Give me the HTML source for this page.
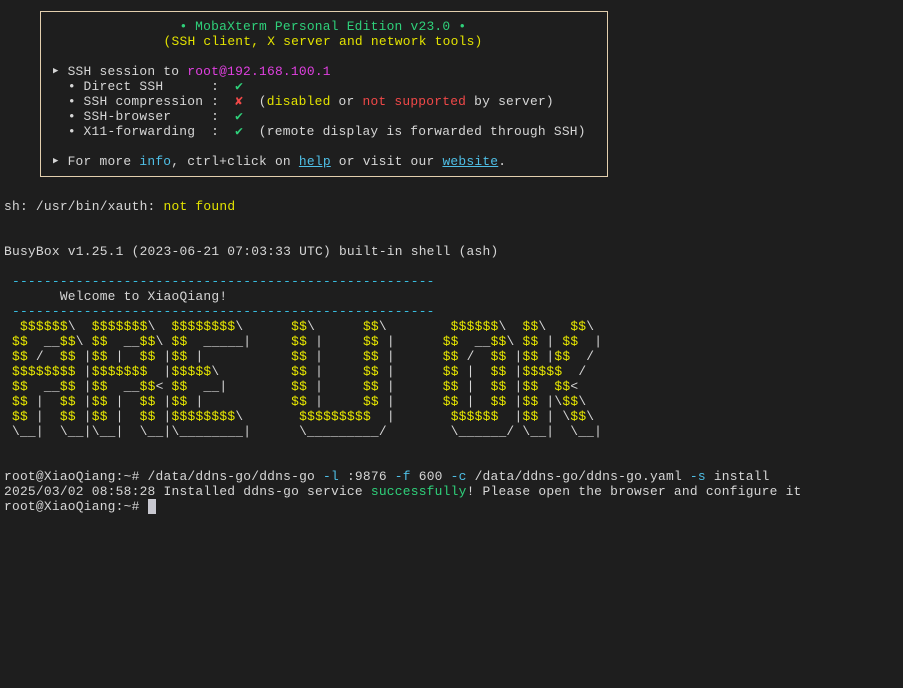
<!DOCTYPE html>
<html><head><meta charset="utf-8"><style>
html,body{margin:0;padding:0;background:#1e1e1e;width:903px;height:688px;overflow:hidden}
pre{position:absolute;left:4px;top:19px;margin:0;font-family:"Liberation Mono","DejaVu Sans Mono",monospace;font-size:12.92px;letter-spacing:0.23px;line-height:15px;color:#d6d6d6;white-space:pre}
.g{color:#2fd07a}.y{color:#e3e300}.m{color:#e040e0}.r{color:#f04848}.c{color:#4fbfe6}.u{color:#4fbfe6;text-decoration:underline}
.d{color:#e8e800}.dash{color:#38bde0}
.w{display:inline-block;width:7.75px;height:15px;line-height:15px;vertical-align:top;overflow:hidden;text-align:center;letter-spacing:0}
.box{position:absolute;left:40px;top:11px;width:566px;height:164px;border:1px solid #e3cfae}
.cur{position:absolute;left:148px;top:499px;width:8px;height:15px;background:#c8c8d0}
</style></head><body>
<div class="box"></div>
<pre>                      <span class="g"><span class="w">•</span> MobaXterm Personal Edition v23.0 <span class="w">•</span></span>
                    <span class="y">(SSH client, X server and network tools)</span>

      <span class="w" style="font-size:9px">▶</span> SSH session to <span class="m">root@192.168.100.1</span>
        <span class="w">•</span> Direct SSH      :  <span class="g w">✔</span>
        <span class="w">•</span> SSH compression :  <span class="r w">✘</span>  (<span class="y">disabled</span> or <span class="r">not supported</span> by server)
        <span class="w">•</span> SSH-browser     :  <span class="g w">✔</span>
        <span class="w">•</span> X11-forwarding  :  <span class="g w">✔</span>  (remote display is forwarded through SSH)

      <span class="w" style="font-size:9px">▶</span> For more <span class="c">info</span>, ctrl+click on <span class="u">help</span> or visit our <span class="u">website</span>.


sh: /usr/bin/xauth: <span class="y">not found</span>


BusyBox v1.25.1 (2023-06-21 07:03:33 UTC) built-in shell (ash)

 <span class="dash">-----------------------------------------------------</span>
       Welcome to XiaoQiang!
 <span class="dash">-----------------------------------------------------</span>
  <span class="d">$$$$$$</span>\  <span class="d">$$$$$$$</span>\  <span class="d">$$$$$$$$</span>\      <span class="d">$$</span>\      <span class="d">$$</span>\        <span class="d">$$$$$$</span>\  <span class="d">$$</span>\   <span class="d">$$</span>\
 <span class="d">$$</span>  __<span class="d">$$</span>\ <span class="d">$$</span>  __<span class="d">$$</span>\ <span class="d">$$</span>  _____|     <span class="d">$$</span> |     <span class="d">$$</span> |      <span class="d">$$</span>  __<span class="d">$$</span>\ <span class="d">$$</span> | <span class="d">$$</span>  |
 <span class="d">$$</span> /  <span class="d">$$</span> |<span class="d">$$</span> |  <span class="d">$$</span> |<span class="d">$$</span> |           <span class="d">$$</span> |     <span class="d">$$</span> |      <span class="d">$$</span> /  <span class="d">$$</span> |<span class="d">$$</span> |<span class="d">$$</span>  /
 <span class="d">$$$$$$$$</span> |<span class="d">$$$$$$$</span>  |<span class="d">$$$$$</span>\         <span class="d">$$</span> |     <span class="d">$$</span> |      <span class="d">$$</span> |  <span class="d">$$</span> |<span class="d">$$$$$</span>  /
 <span class="d">$$</span>  __<span class="d">$$</span> |<span class="d">$$</span>  __<span class="d">$$</span>&lt; <span class="d">$$</span>  __|        <span class="d">$$</span> |     <span class="d">$$</span> |      <span class="d">$$</span> |  <span class="d">$$</span> |<span class="d">$$</span>  <span class="d">$$</span>&lt;
 <span class="d">$$</span> |  <span class="d">$$</span> |<span class="d">$$</span> |  <span class="d">$$</span> |<span class="d">$$</span> |           <span class="d">$$</span> |     <span class="d">$$</span> |      <span class="d">$$</span> |  <span class="d">$$</span> |<span class="d">$$</span> |\<span class="d">$$</span>\
 <span class="d">$$</span> |  <span class="d">$$</span> |<span class="d">$$</span> |  <span class="d">$$</span> |<span class="d">$$$$$$$$</span>\       <span class="d">$$$$$$$$$</span>  |       <span class="d">$$$$$$</span>  |<span class="d">$$</span> | \<span class="d">$$</span>\
 \__|  \__|\__|  \__|\________|      \_________/        \______/ \__|  \__|


root@XiaoQiang:~# /data/ddns-go/ddns-go <span class="c">-l</span> :9876 <span class="c">-f</span> 600 <span class="c">-c</span> /data/ddns-go/ddns-go.yaml <span class="c">-s</span> install
2025/03/02 08:58:28 Installed ddns-go service <span class="g">successfully</span>! Please open the browser and configure it
root@XiaoQiang:~# </pre>
<div class="cur"></div>
</body></html>
